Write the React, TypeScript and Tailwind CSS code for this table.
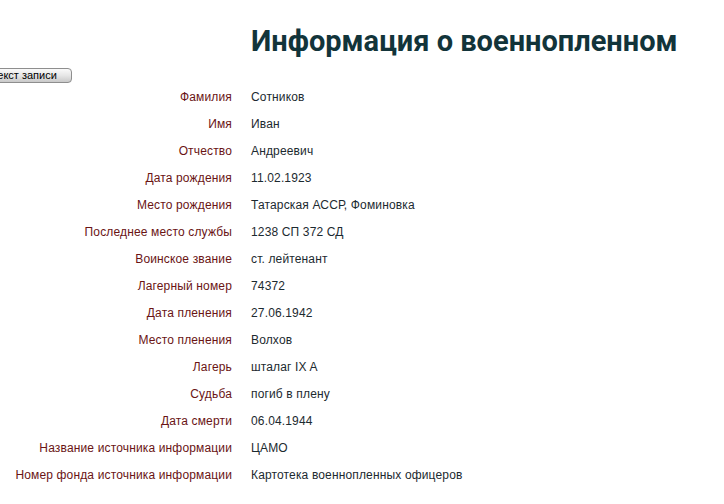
const rows: [string, string][] = [
  ["Фамилия", "Сотников"],
  ["Имя", "Иван"],
  ["Отчество", "Андреевич"],
  ["Дата рождения", "11.02.1923"],
  ["Место рождения", "Татарская АССР, Фоминовка"],
  ["Последнее место службы", "1238 СП 372 СД"],
  ["Воинское звание", "ст. лейтенант"],
  ["Лагерный номер", "74372"],
  ["Дата пленения", "27.06.1942"],
  ["Место пленения", "Волхов"],
  ["Лагерь", "шталаг IX A"],
  ["Судьба", "погиб в плену"],
  ["Дата смерти", "06.04.1944"],
  ["Название источника информации", "ЦАМО"],
  ["Номер фонда источника информации", "Картотека военнопленных офицеров"],
];

export default function App() {
  return (
    <div className="min-h-screen w-[724px] h-[504px] overflow-hidden bg-white font-['Liberation_Sans',Arial,sans-serif]">
      {/* Header */}
      <h1 className="pt-[24px] pl-[251px] font-['Roboto',Arial,sans-serif] text-[29px] leading-[34px] font-bold text-[#12343a]">
        Информация о военнопленном
      </h1>

      <button className="mt-[10px] -ml-[24px] h-[15px] w-[96px] rounded-[4px] border border-[#8e8e8e] bg-gradient-to-b from-[#fafafa] via-[#e6e6e6] to-[#c9c9c9] text-[11px] leading-[13px] text-black">
        Текст записи
      </button>

      {/* Record */}
      <div className="-mt-[3px] flex flex-col">
        {rows.map(([label, value]) => (
          <div key={label} className="flex h-[27px] items-center gap-[19px] text-[12px] tracking-[0.15px]">
            <span className="w-[232px] shrink-0 text-right text-[#6a1414]">{label}</span>
            <span className="text-[#1c2a30]">{value}</span>
          </div>
        ))}
      </div>
    </div>
  );
}
